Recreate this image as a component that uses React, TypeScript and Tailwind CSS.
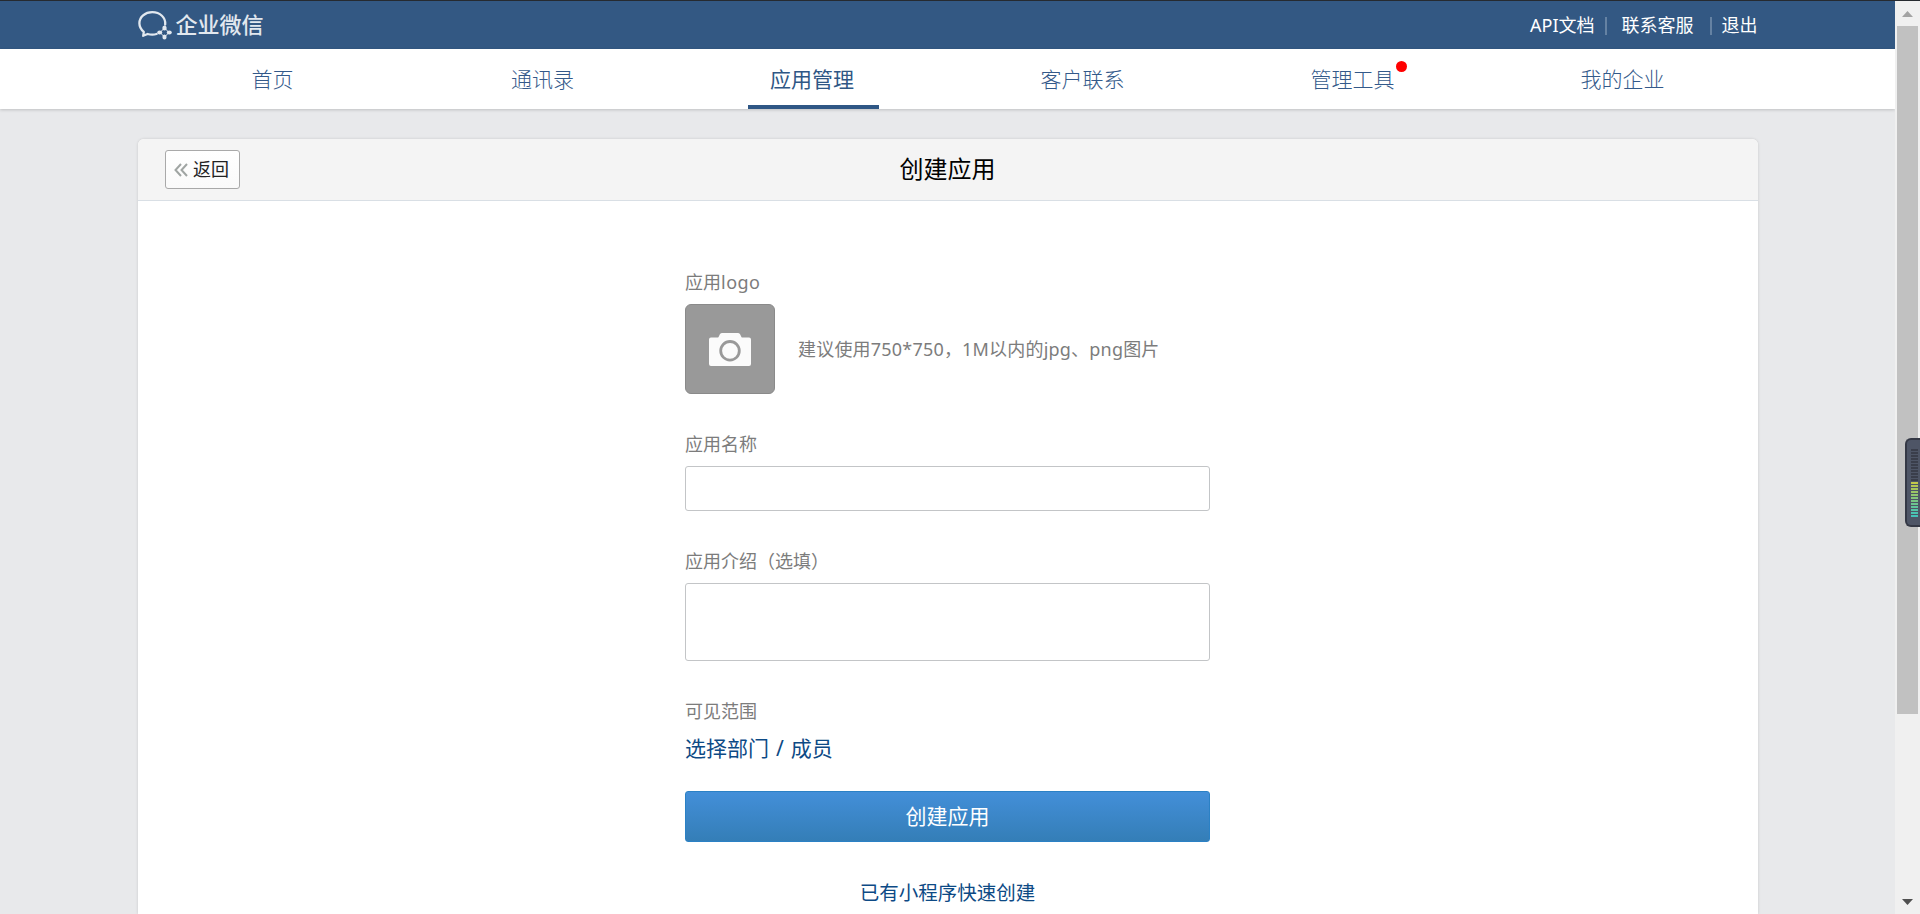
import type { ReactNode } from 'react';

const navItems = [
  { label: '首页' },
  { label: '通讯录' },
  { label: '应用管理', active: true },
  { label: '客户联系' },
  { label: '管理工具', dot: true },
  { label: '我的企业' },
];

const meterBars = [
  '#3a3e4b', '#3a3e4b', '#3a3e4b', '#3a3e4b', '#3a3e4b', '#3a3e4b', '#3a3e4b', '#3a3e4b', '#3a3e4b', '#3a3e4b', '#3a3e4b',
  '#c3c84a', '#b4c552', '#a6c45c', '#9bc566', '#90c670', '#84c67a', '#78c685', '#6cc690', '#60c59b', '#56c4a6', '#4cc3b0', '#45c2b8',
];

function Logo() {
  return (
    <div className="flex items-center text-[#e2e8ef]">
      <svg width="35" height="30" viewBox="0 0 35 30" fill="none">
        <path
          d="M27.2 14.5C27.9 7.6 22 2.2 14.3 2.2C7 2.2 1.4 7 1.4 13.2C1.4 16.8 3 19.6 5.8 21.8L5.2 25.8L9.6 24C12.5 24.8 15.8 24.9 18.6 24"
          stroke="currentColor"
          strokeWidth="2.3"
          strokeLinejoin="round"
          strokeLinecap="round"
        />
        <g fill="currentColor">
          <ellipse cx="26.5" cy="18" rx="2.2" ry="2.5" />
          <ellipse cx="31.3" cy="22.5" rx="2.5" ry="2.1" />
          <ellipse cx="26.5" cy="27" rx="2.1" ry="2.5" />
          <ellipse cx="21.7" cy="22.5" rx="2.5" ry="2.1" />
        </g>
        <path d="M26.5 18L31 22.5L26.5 27L22 22.5Z" stroke="currentColor" strokeWidth="1" />
      </svg>
      <span className="ml-[3px] pb-0.5 text-[22px] leading-none font-medium">企业微信</span>
    </div>
  );
}

function TopBar() {
  return (
    <header className="h-[49px] border-t border-[#262a30] bg-[#335883]">
      <div className="mx-auto flex h-full w-[1620px] items-center justify-between">
        <Logo />
        <div className="flex items-center pb-px text-lg leading-none text-white">
          <a>API文档</a>
          <span className="mt-0.5 mr-[15px] ml-[10px] h-[18px] w-0.5 bg-[#6582a3]" />
          <a>联系客服</a>
          <span className="mt-0.5 mr-[10px] ml-[16px] h-[18px] w-0.5 bg-[#6582a3]" />
          <a>退出</a>
        </div>
      </div>
    </header>
  );
}

function NavBar() {
  return (
    <nav className="h-[60px] bg-white shadow-[0_1px_3px_rgba(0,0,0,0.18)]">
      <ul className="mx-auto flex h-full w-[1620px]">
        {navItems.map((item) => (
          <li key={item.label} className="flex flex-1 justify-center">
            <a
              className={
                item.active
                  ? 'ml-px flex w-[131px] items-center justify-center border-b-4 border-[#2f5785] pt-1.5 pr-0.5 text-[21px] text-[#2f5785]'
                  : 'flex w-[131px] items-center justify-center pt-0.5 text-[21px] font-light text-[#33598a]'
              }
            >
              <span className="relative">
                {item.label}
                {item.dot && <i className="absolute -top-[3px] -right-3 size-[11px] rounded-full bg-[#ff0000]" />}
              </span>
            </a>
          </li>
        ))}
      </ul>
    </nav>
  );
}

function Field({ label, className, children }: { label: ReactNode; className?: string; children: ReactNode }) {
  return (
    <div className={className}>
      <label className="block h-[33px] text-lg leading-[22px] text-[#7c7c7c]">{label}</label>
      {children}
    </div>
  );
}

function CreateForm() {
  return (
    <div className="mx-auto w-[525px] pt-[70px]">
      <Field label={<>应用<span className="tracking-[0.5px]">logo</span></>}>
        <div className="flex items-center">
          <div className="flex size-[90px] items-center justify-center rounded-md border border-[#8a8a8a] bg-[#999]">
            <svg width="42" height="33" viewBox="0 0 42 33">
              <path
                d="M2 4.5H8.5C9.5 4.5 9.8 3.6 10.3 2.4C10.9 .9 11.5 0 13 0H29C30.5 0 31.1 .9 31.7 2.4C32.2 3.6 32.5 4.5 33.5 4.5H40A2 2 0 0 1 42 6.5V31A2 2 0 0 1 40 33H2A2 2 0 0 1 0 31V6.5A2 2 0 0 1 2 4.5Z"
                fill="#fbfbfb"
              />
              <circle cx="21" cy="17.8" r="9.3" fill="none" stroke="#999" strokeWidth="2.8" />
            </svg>
          </div>
          <p className="ml-[23px] pb-px text-lg tracking-[0.2px] text-[#7c7c7c]">建议使用750*750，1M以内的jpg、png图片</p>
        </div>
      </Field>
      <Field label="应用名称" className="mt-[39px]">
        <input className="block h-[45px] w-full rounded-[3px] border border-[#c3c5c7] bg-white px-3 outline-none" />
      </Field>
      <Field label="应用介绍（选填）" className="mt-[39px]">
        <textarea className="block h-[78px] w-full resize-none rounded-[3px] border border-[#c3c5c7] bg-white px-3 outline-none" />
      </Field>
      <Field label="可见范围" className="mt-[39px]">
        <a className="block h-[30px] text-[21px] leading-[30px] text-[#0d4a85] [word-spacing:1.5px]">选择部门 / 成员</a>
      </Field>
      <button className="mt-[28px] block h-[51px] w-full rounded-[3px] border border-[#2b81c5] bg-linear-to-b from-[#438fd9] to-[#347eb7] text-[21px] text-white">
        创建应用
      </button>
      <a className="mt-[36px] block text-center text-[19.5px] leading-[30px] text-[#0d4a85]">已有小程序快速创建</a>
    </div>
  );
}

function ScrollBar() {
  return (
    <aside className="flex w-[25px] shrink-0 flex-col items-center border-t border-[#262a30] bg-[#f0f0f0]">
      <svg width="25" height="25" viewBox="0 0 25 25">
        <path d="M7 16L12.5 10L18 16Z" fill="#a3a3a3" />
      </svg>
      <div className="h-[688px] w-[21px] bg-[#c1c1c1]" />
      <svg className="mt-auto" width="25" height="25" viewBox="0 0 25 25">
        <path d="M7 10L12.5 16L18 10Z" fill="#505050" />
      </svg>
    </aside>
  );
}

function MeterWidget() {
  return (
    <div className="absolute top-[438px] right-0 flex h-[89px] w-[15px] flex-col items-end gap-px rounded-l-md border-2 border-r-0 border-[#343845] bg-[#4e5566] pt-[9px] pr-0.5">
      {meterBars.map((color, i) => (
        <span key={i} className="h-[2px] w-[7px]" style={{ backgroundColor: color }} />
      ))}
    </div>
  );
}

export default function App() {
  return (
    <div className="relative flex h-[914px] w-[1920px] overflow-hidden bg-[#e8e9eb] font-['Noto_Sans','Noto_Sans_CJK_SC',sans-serif]">
      <div className="flex min-w-0 flex-1 flex-col">
        <TopBar />
        <NavBar />
        <main className="mx-auto mt-[30px] min-h-0 w-[1620px] flex-1 rounded-t-md bg-white shadow-[0_0_3px_rgba(0,0,0,0.15)]">
          <div className="grid h-[62px] grid-cols-3 items-center rounded-t-md border-b border-[#d9dfe5] bg-[#f4f4f4] px-[27px]">
            <button className="flex h-[39px] w-[75px] items-center justify-center rounded-[3px] border border-[#a9a9a9] bg-linear-to-b from-white to-[#fafafa] pr-px text-lg text-[#222]">
              <svg className="mr-[5px]" width="14" height="14" viewBox="0 0 14 14" fill="none" stroke="#a0a5a3" strokeWidth="2">
                <path d="M7 1L1.5 7L7 13M13 1L7.5 7L13 13" />
              </svg>
              <span className="pb-0.5">返回</span>
            </button>
            <h1 className="pb-0.5 text-center text-2xl text-black">创建应用</h1>
          </div>
          <CreateForm />
        </main>
      </div>
      <ScrollBar />
      <MeterWidget />
    </div>
  );
}
